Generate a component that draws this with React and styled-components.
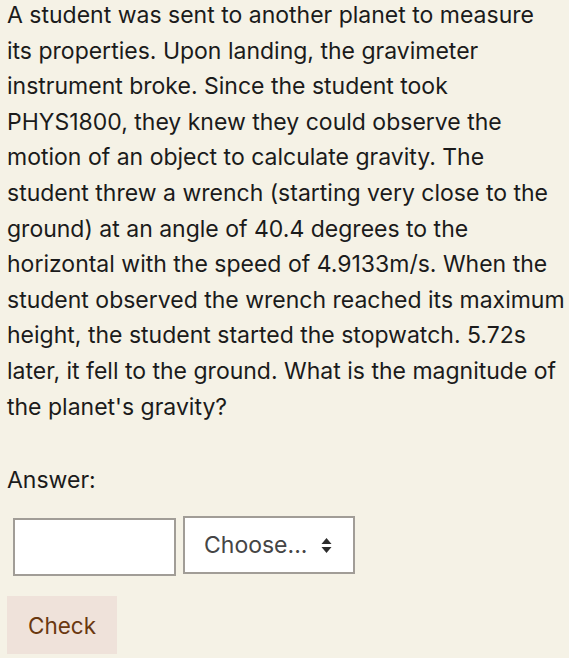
import React from "react";
import styled, { createGlobalStyle } from "styled-components";

const Global = createGlobalStyle`
  html, body { margin: 0; padding: 0; background: #f5f2e6; }
  body { font-family: Inter, "Liberation Sans", sans-serif; color: #1b1b1b; }
`;

const Page = styled.div`
  width: 569px;
  height: 658px;
  overflow: hidden;
  padding: 0 0 0 7px;
  box-sizing: border-box;
  background: #f5f2e6;
`;

const Question = styled.p`
  margin: -2px 0 0 0;
  font-size: 23px;
  line-height: 35.6px;
  white-space: nowrap;
  letter-spacing: 0;
`;

const Label = styled.div`
  margin-top: 40px;
  font-size: 23px;
  line-height: 30px;
`;

const Row = styled.div`
  display: flex;
  align-items: flex-start;
  gap: 7px;
  margin-top: 21px;
  padding-left: 6px;
`;

const TextInput = styled.input`
  box-sizing: border-box;
  width: 163px;
  height: 58px;
  margin-top: 2px;
  background: #fff;
  border: 2px solid #a19d97;
  font: inherit;
  font-size: 21px;
  outline: none;
`;

const SelectBox = styled.div`
  box-sizing: border-box;
  width: 172px;
  height: 58px;
  background: #fff;
  border: 2px solid #a19d97;
  display: flex;
  align-items: center;
  padding-left: 19px;
  gap: 14px;
  font-size: 23px;
  color: #454545;
`;

const Button = styled.button`
  margin-top: 20px;
  box-sizing: border-box;
  width: 110px;
  height: 58px;
  background: #efe2da;
  border: none;
  color: #6a3810;
  font-family: inherit;
  font-size: 22.5px;
  padding: 0;
`;

const Arrows = () => (
  <svg width="11" height="17" viewBox="0 0 11 17">
    <path d="M5.5 1 L10.5 7 H0.5 Z" fill="#2c2c2c" />
    <path d="M5.5 16 L10.5 10 H0.5 Z" fill="#2c2c2c" />
  </svg>
);

export default function App() {
  return (
    <Page>
      <Global />
      <Question>
        A student was sent to another planet to measure<br />
        its properties. Upon landing, the gravimeter<br />
        instrument broke. Since the student took<br />
        PHYS1800, they knew they could observe the<br />
        motion of an object to calculate gravity. The<br />
        student threw a wrench (starting very close to the<br />
        ground) at an angle of 40.4 degrees to the<br />
        horizontal with the speed of 4.9133m/s. When the<br />
        student observed the wrench reached its maximum<br />
        height, the student started the stopwatch. 5.72s<br />
        later, it fell to the ground. What is the magnitude of<br />
        the planet's gravity?
      </Question>
      <Label>Answer:</Label>
      <Row>
        <TextInput type="text" />
        <SelectBox>
          <span>Choose...</span>
          <Arrows />
        </SelectBox>
      </Row>
      <Button>Check</Button>
    </Page>
  );
}
